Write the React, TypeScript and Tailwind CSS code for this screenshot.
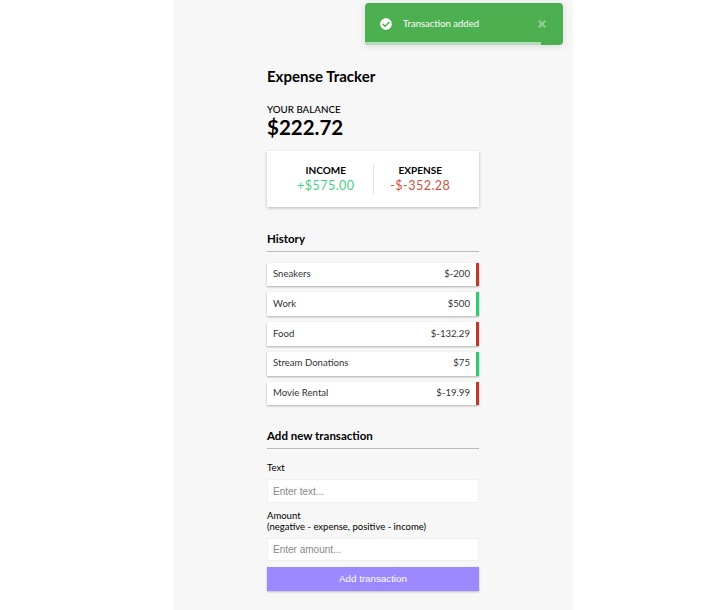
const transactions = [
  { id: 1, text: 'Sneakers', amount: '$-200', minus: true },
  { id: 2, text: 'Work', amount: '$500', minus: false },
  { id: 3, text: 'Food', amount: '$-132.29', minus: true },
  { id: 4, text: 'Stream Donations', amount: '$75', minus: false },
  { id: 5, text: 'Movie Rental', amount: '$-19.99', minus: true },
];

function Toast() {
  return (
    <div className="absolute top-[3px] left-[365px] w-[198px] h-[42px] rounded bg-[#4caf50] text-white overflow-hidden shadow-[0_1px_8px_rgba(0,0,0,0.12)]">
      <div className="flex items-center h-full pl-[15px] pr-[17px]">
        <svg viewBox="0 0 512 512" className="w-3 h-3 shrink-0" fill="currentColor">
          <path d="M504 256c0 137-111 248-248 248S8 393 8 256 119 8 256 8s248 111 248 248zM227 387l184-184c6-6 6-16 0-22l-23-23c-6-6-16-6-22 0L216 308l-70-70c-6-6-16-6-22 0l-23 23c-6 6-6 16 0 22l104 104c6 6 16 6 22 0z" />
        </svg>
        <span className="ml-[11px] text-[9.5px] flex-1">Transaction added</span>
        <svg viewBox="0 0 10 10" className="w-[8px] h-[8px] text-white/40" stroke="currentColor" strokeWidth={2.6}>
          <path d="M1 1l8 8M9 1l-8 8" />
        </svg>
      </div>
      <div className="absolute left-0 bottom-0 h-[3px] w-[176px] bg-[#b5dcb6]" />
    </div>
  );
}

function SectionTitle({ children }: { children: string }) {
  return <h3 className="text-[11.5px] leading-[14px] font-bold border-b border-[#bbb] pb-[5px]">{children}</h3>;
}

export default function App() {
  return (
    <div className="relative h-[610px] overflow-hidden bg-white font-['Lato','Liberation_Sans',sans-serif] text-black">
      <Toast />
      <main className="w-[400px] h-full ml-[173px] bg-[#f7f7f7] px-[94px] pt-[68px]">
        <h2 className="text-[15px] leading-[17px] font-bold">Expense Tracker</h2>

        <h4 className="mt-[18px] text-[9.75px] leading-[12px] font-medium">YOUR BALANCE</h4>
        <h1 className="text-[20.5px] leading-[24px] font-bold">$222.72</h1>

        <div className="mt-[12px] h-[56px] flex items-center bg-white shadow-[0_1px_3px_rgba(0,0,0,0.25)]">
          <div className="flex-1 text-center border-r border-[#e5e5e5] pl-[12px]">
            <h4 className="text-[10px] leading-[13px] font-bold">INCOME</h4>
            <p className="text-[12.5px] leading-[17px] tracking-[0.5px] text-[#45d085]">+$575.00</p>
          </div>
          <div className="flex-1 text-center pr-[12px]">
            <h4 className="text-[10px] leading-[13px] font-bold">EXPENSE</h4>
            <p className="text-[12.5px] leading-[17px] tracking-[0.5px] text-[#cc5045]">-$-352.28</p>
          </div>
        </div>

        <div className="mt-[25px]">
          <SectionTitle>History</SectionTitle>
        </div>
        <ul className="mt-[10.5px] flex flex-col gap-[6px]">
          {transactions.map((t) => (
            <li
              key={t.id}
              className={`flex items-center justify-between h-[23.75px] bg-white px-[6px] border-r-[3px] text-[9.6px] text-[#333] shadow-[0_1px_2px_rgba(0,0,0,0.3)] ${
                t.minus ? 'border-[#c0392b]' : 'border-[#2ecc71]'
              }`}
            >
              <span>{t.text}</span>
              <span>{t.amount}</span>
            </li>
          ))}
        </ul>

        <div className="mt-[23.5px]">
          <SectionTitle>Add new transaction</SectionTitle>
        </div>
        <form className="mt-[13px]">
          <label className="block text-[9.5px] leading-[12px]">Text</label>
          <input
            placeholder="Enter text..."
            className="block mt-[5.5px] w-full h-[23.5px] px-[5px] bg-white border border-[#efefef] text-[10px] font-['Liberation_Sans',sans-serif] placeholder:text-[#888]"
          />
          <label className="block mt-[7px] text-[9.5px] leading-[11.5px]">
            Amount
            <br />
            (negative - expense, positive - income)
          </label>
          <input
            placeholder="Enter amount..."
            className="block mt-[5px] w-full h-[23.5px] px-[5px] bg-white border border-[#efefef] text-[10px] font-['Liberation_Sans',sans-serif] placeholder:text-[#888]"
          />
          <button
            type="button"
            className="block mt-[6px] w-full h-[24px] bg-[#9c88ff] text-white text-[9.75px] font-['Liberation_Sans',sans-serif] shadow-[0_1px_2px_rgba(0,0,0,0.25)]"
          >
            Add transaction
          </button>
        </form>
      </main>
    </div>
  );
}
